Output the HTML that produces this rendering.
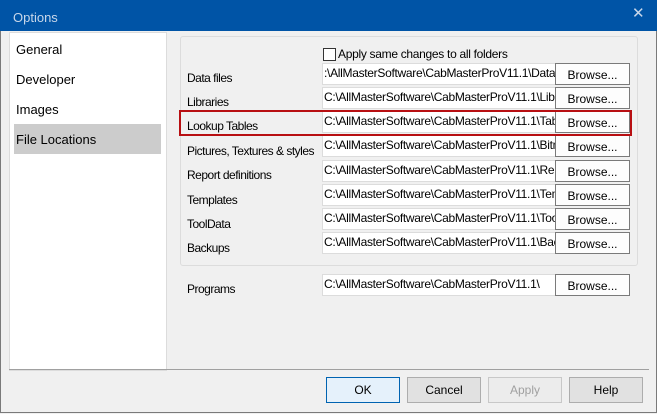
<html><head><style>
body{margin:0;width:657px;height:414px;overflow:hidden;background:#f0f0f0;font-family:"Liberation Sans",sans-serif;font-size:12px;color:#000;position:relative}
.a{position:absolute}
.tb{position:absolute;left:322px;width:231px;height:20px;background:#fff;border:1px solid #dcdcdc;white-space:nowrap;overflow:hidden;line-height:18px;padding-left:1px;box-sizing:content-box;letter-spacing:-0.3px}
.br{position:absolute;left:555px;width:73px;height:20px;background:#fdfdfd;border:1px solid #7a7a7a;text-align:center;line-height:22px}
.lb{position:absolute;left:187px;letter-spacing:-0.5px}
.bt{position:absolute;top:377px;width:72px;height:24px;border:1px solid #adadad;background:#e1e1e1;text-align:center;line-height:24px}
.nav{position:absolute;left:16px;font-size:13px}
</style></head><body>
<div class="a" style="left:0;top:0;width:655px;height:412px;border:1px solid #7a7a7a;border-top:none"></div>
<div class="a" style="left:0;top:0;width:657px;height:31px;background:#0054a6"></div>
<div class="a" style="left:13px;top:10px;color:#c8d7ea;font-size:13px">Options</div>
<div class="a" style="left:632px;top:4px;color:#c8d7ea;font-size:15px">✕</div>
<div class="a" style="left:9px;top:32px;width:156px;height:337px;background:#fff;border:1px solid #dcdcdc"></div>
<div class="a" style="left:14px;top:124px;width:147px;height:30px;background:#cccccc"></div>
<div class="nav" style="top:42px">General</div>
<div class="nav" style="top:72px">Developer</div>
<div class="nav" style="top:102px">Images</div>
<div class="nav" style="top:132px">File Locations</div>
<div class="a" style="left:180px;top:36px;width:456px;height:228px;border:1px solid #dcdcdc;border-radius:3px"></div>
<div class="a" style="left:323px;top:48px;width:11px;height:11px;border:1px solid #333;background:#fff"></div>
<div class="a" style="left:338px;top:47px;letter-spacing:-0.3px">Apply same changes to all folders</div>
<div class="tb" style="top:63px">:\AllMasterSoftware\CabMasterProV11.1\Data\</div><div class="br" style="top:63px">Browse...</div>
<div class="tb" style="top:87px">C:\AllMasterSoftware\CabMasterProV11.1\Libraries</div><div class="br" style="top:87px">Browse...</div>
<div class="tb" style="top:111px">C:\AllMasterSoftware\CabMasterProV11.1\Tables</div><div class="br" style="top:111px">Browse...</div>
<div class="tb" style="top:135px">C:\AllMasterSoftware\CabMasterProV11.1\Bitmaps</div><div class="br" style="top:135px">Browse...</div>
<div class="tb" style="top:160px">C:\AllMasterSoftware\CabMasterProV11.1\Reports</div><div class="br" style="top:160px">Browse...</div>
<div class="tb" style="top:184px">C:\AllMasterSoftware\CabMasterProV11.1\Templates</div><div class="br" style="top:184px">Browse...</div>
<div class="tb" style="top:208px">C:\AllMasterSoftware\CabMasterProV11.1\ToolData</div><div class="br" style="top:208px">Browse...</div>
<div class="tb" style="top:232px">C:\AllMasterSoftware\CabMasterProV11.1\Backups</div><div class="br" style="top:232px">Browse...</div>
<div class="a" style="left:179px;top:110px;width:449px;height:22px;border:2px solid #b80f12"></div>
<div class="lb" style="top:71px">Data files</div>
<div class="lb" style="top:95px">Libraries</div>
<div class="lb" style="top:119px">Lookup Tables</div>
<div class="lb" style="top:144px">Pictures, Textures &amp; styles</div>
<div class="lb" style="top:168px">Report definitions</div>
<div class="lb" style="top:193px">Templates</div>
<div class="lb" style="top:217px">ToolData</div>
<div class="lb" style="top:241px">Backups</div>
<div class="lb" style="top:282px">Programs</div>
<div class="tb" style="top:274px">C:\AllMasterSoftware\CabMasterProV11.1\</div><div class="br" style="top:274px">Browse...</div>
<div class="a" style="left:9px;top:369px;width:640px;height:1px;background:#a0a0a0"></div>
<div class="bt" style="left:326px;border:1px solid #0063b1;background:#e5f1fb">OK</div>
<div class="bt" style="left:407px">Cancel</div>
<div class="bt" style="left:488px;color:#a0a0a0;background:#ececec;border-color:#c8c8c8">Apply</div>
<div class="bt" style="left:569px">Help</div>
</body></html>
